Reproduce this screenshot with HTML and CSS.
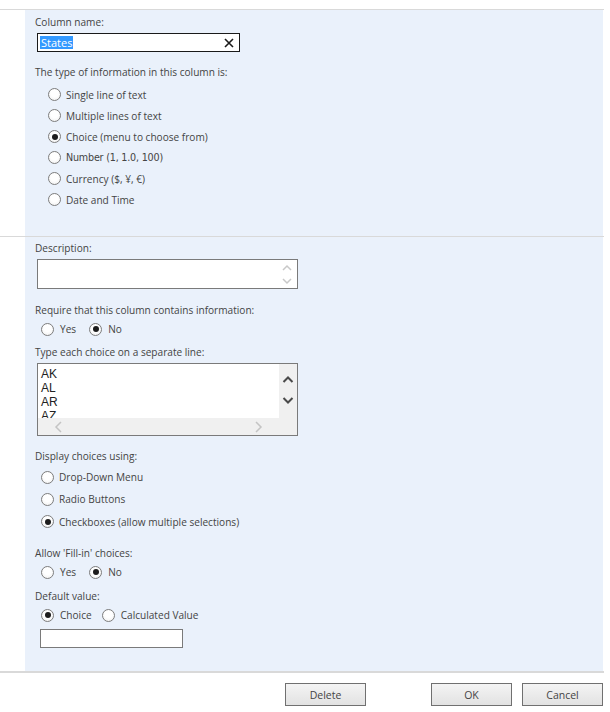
FILE: index.html
```html
<!DOCTYPE html>
<html>
<head>
<meta charset="utf-8">
<link rel="stylesheet" href="styles.css">
</head>
<body>
<div class="page">
  <div class="section sec-top">
    <div class="gutter"></div>
    <div class="panel panel-top">
      <div class="label">Column name:</div>
      <div class="name-input">
        <span class="sel">States</span>
        <svg class="clear" width="10" height="10" viewBox="0 0 10 10"><path d="M1 1 L9 9 M9 1 L1 9" stroke="#1a1a1a" stroke-width="1.6" fill="none"/></svg>
      </div>
      <div class="label gap-13">The type of information in this column is:</div>
      <div class="type-list">
        <label class="row21"><span class="radio"></span>Single line of text</label>
        <label class="row21"><span class="radio"></span>Multiple lines of text</label>
        <label class="row21"><span class="radio on"></span>Choice (menu to choose from)</label>
        <label class="row21"><span class="radio"></span><span class="alt">Number (1, 1.0, 100)</span></label>
        <label class="row21"><span class="radio"></span>Currency ($, ¥, €)</label>
        <label class="row21"><span class="radio"></span>Date and Time</label>
      </div>
    </div>
  </div>
  <div class="section sec-main">
    <div class="gutter"></div>
    <div class="panel panel-main">
      <div class="label">Description:</div>
      <div class="desc-box">
        <div class="desc-text"></div>
        <div class="desc-arrows">
          <svg width="10" height="7" viewBox="0 0 10 7"><polyline points="1,6 5,2 9,6" stroke="#c8c8c8" stroke-width="1.5" fill="none"/></svg>
          <svg width="10" height="7" viewBox="0 0 10 7"><polyline points="1,1 5,5 9,1" stroke="#c8c8c8" stroke-width="1.5" fill="none"/></svg>
        </div>
      </div>
      <div class="label gap-14">Require that this column contains information:</div>
      <div class="inline-row">
        <label class="opt"><span class="radio"></span>Yes</label>
        <label class="opt"><span class="radio on"></span>No</label>
      </div>
      <div class="label gap-8">Type each choice on a separate line:</div>
      <div class="choices">
        <div class="choices-text">AK<br>AL<br>AR<br>AZ</div>
        <div class="vscroll">
          <svg width="12" height="8" viewBox="0 0 12 8"><polyline points="1.5,7 6,2.5 10.5,7" stroke="#4a4a4a" stroke-width="2" fill="none"/></svg>
          <svg width="12" height="8" viewBox="0 0 12 8"><polyline points="1.5,1 6,5.5 10.5,1" stroke="#4a4a4a" stroke-width="2" fill="none"/></svg>
        </div>
        <div class="hscroll">
          <svg width="8" height="12" viewBox="0 0 8 12"><polyline points="7,1 2,6 7,11" stroke="#c4c4c4" stroke-width="1.5" fill="none"/></svg>
          <svg width="8" height="12" viewBox="0 0 8 12"><polyline points="1,1 6,6 1,11" stroke="#c4c4c4" stroke-width="1.5" fill="none"/></svg>
        </div>
      </div>
      <div class="label gap-13">Display choices using:</div>
      <div class="display-list">
        <label class="row22"><span class="radio"></span>Drop-Down Menu</label>
        <label class="row22"><span class="radio"></span>Radio Buttons</label>
        <label class="row23"><span class="radio on"></span>Checkboxes (allow multiple selections)</label>
      </div>
      <div class="label gap-13">Allow 'Fill-in' choices:</div>
      <div class="inline-row gap-6">
        <label class="opt"><span class="radio"></span>Yes</label>
        <label class="opt"><span class="radio on"></span>No</label>
      </div>
      <div class="label gap-9">Default value:</div>
      <div class="inline-row gap-6">
        <label class="opt opt-tight"><span class="radio on"></span>Choice</label>
        <label class="opt"><span class="radio"></span>Calculated Value</label>
      </div>
      <div class="default-input"></div>
    </div>
  </div>
  <div class="buttons">
    <button class="btn btn-delete">Delete</button>
    <button class="btn">OK</button>
    <button class="btn">Cancel</button>
  </div>
</div>
</body>
</html>
```
FILE: styles.css
```css
html, body {
  margin: 0;
  padding: 0;
  background: #ffffff;
}
body {
  font-family: "Open Sans", "Liberation Sans", sans-serif;
  font-size: 10.1px;
  color: #444444;
  padding-top: 9px;
}
.page {
  width: 604px;
}
.section {
  display: grid;
  grid-template-columns: 25px 578px;
  border-top: 1px solid #d9d9d9;
}
.panel {
  background: #eaf1fb;
  padding-left: 10px;
}
.panel-top {
  height: 226px;
  padding-top: 5px;
  box-sizing: border-box;
}
.panel-main {
  padding-top: 4px;
  padding-bottom: 23px;
}
.label {
  height: 14px;
  line-height: 14px;
  white-space: nowrap;
}
.gap-13 { margin-top: 13px; }
.gap-14 { margin-top: 14px; }
.gap-12 { margin-top: 12px; }
.gap-9 { margin-top: 9px; }
.gap-8 { margin-top: 8px; }
.gap-6 { margin-top: 6px; }
.gap-5 { margin-top: 5px; }

.name-input {
  margin-top: 4px;
  margin-left: 2px;
  width: 203px;
  height: 19px;
  box-sizing: border-box;
  border: 1px solid #1a1a1a;
  background: #ffffff;
  display: flex;
  align-items: center;
  justify-content: space-between;
  padding: 0 5px 0 2px;
}
.sel {
  background: #3399ff;
  color: #ffffff;
  line-height: 13px;
  font-size: 11px;
  padding: 0 1px;
}
.clear { display: block; }

.type-list {
  margin-top: 5px;
  padding-left: 13px;
}
.row21, .row22, .row23 {
  display: flex;
  align-items: center;
  height: 21px;
}
.row22 { height: 22px; }
.row23 { height: 23px; }
.display-list {
  margin-top: 3px;
  padding-left: 6px;
}

.radio {
  width: 13px;
  height: 13px;
  box-sizing: border-box;
  border: 1px solid #7d7d7d;
  border-radius: 50%;
  background: radial-gradient(circle at 50% 40%, #ffffff 40%, #ececec 100%);
  margin-right: 5px;
  flex: none;
  display: flex;
  align-items: center;
  justify-content: center;
}
.radio.on::after {
  content: "";
  width: 6px;
  height: 6px;
  border-radius: 50%;
  background: #1c1c1c;
}
.alt {
  font-family: "DejaVu Sans", sans-serif;
  font-size: 9.6px;
  letter-spacing: -0.2px;
}

.desc-box {
  margin-top: 4px;
  margin-left: 2px;
  width: 261px;
  height: 30px;
  box-sizing: border-box;
  border: 1px solid #7a7a7a;
  background: #ffffff;
  display: flex;
  justify-content: space-between;
}
.desc-arrows {
  width: 16px;
  display: flex;
  flex-direction: column;
  justify-content: space-between;
  align-items: center;
  padding: 4px 2px 3px 0;
}
.desc-arrows svg { display: block; }

.inline-row {
  margin-top: 4px;
  padding-left: 6px;
  display: flex;
  align-items: center;
  height: 16px;
}
.opt {
  display: flex;
  align-items: center;
  margin-right: 13px;
}
.opt-tight { margin-right: 10px; }
.opt .radio { margin-right: 6px; }

.choices {
  margin-top: 4px;
  margin-left: 2px;
  width: 261px;
  height: 73px;
  box-sizing: border-box;
  border: 1px solid #7a7a7a;
  background: #f0f0f0;
  display: grid;
  grid-template-columns: 241px 18px;
  grid-template-rows: 54px 17px;
}
.choices-text {
  background: #ffffff;
  overflow: hidden;
  padding: 3px 0 0 3px;
  font-family: "Liberation Sans", sans-serif;
  font-size: 12px;
  line-height: 14px;
  color: #222222;
}
.vscroll {
  grid-row: 1 / span 2;
  grid-column: 2;
  display: flex;
  flex-direction: column;
  align-items: center;
  gap: 14px;
  padding-top: 11px;
}
.vscroll svg, .hscroll svg { display: block; }
.hscroll {
  display: flex;
  align-items: center;
  justify-content: space-between;
  padding: 0 16px 0 16px;
}

.default-input {
  margin-top: 6px;
  margin-left: 5px;
  width: 143px;
  height: 19px;
  box-sizing: border-box;
  border: 1px solid #7a7a7a;
  background: #ffffff;
}

.buttons {
  border-top: 2px solid #d9d9d9;
  display: flex;
  justify-content: flex-end;
  padding: 10px 1px 0 0;
}
.btn {
  width: 81px;
  height: 23px;
  box-sizing: border-box;
  border: 1px solid #707070;
  border-radius: 0;
  background: linear-gradient(#f4f4f4, #e2e2e2);
  font-family: "Open Sans", "Liberation Sans", sans-serif;
  font-size: 10.5px;
  color: #444444;
  margin: 0 0 0 10px;
  padding: 0;
}
.btn-delete {
  margin-right: 55px;
}
```
